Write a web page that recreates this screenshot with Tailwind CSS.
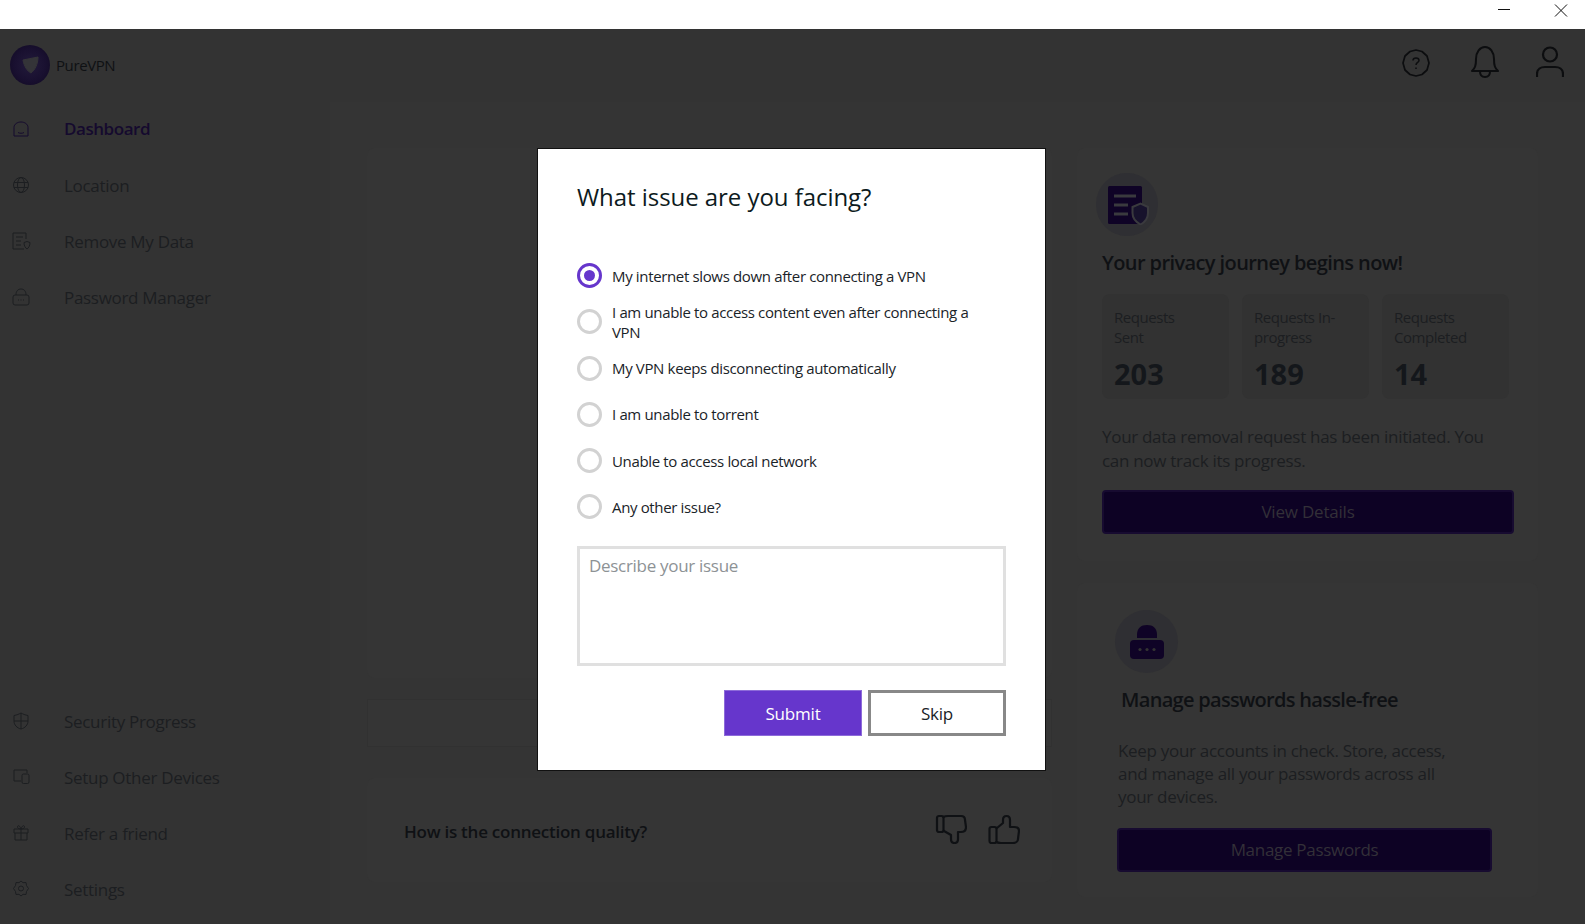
<!DOCTYPE html>
<html lang="en">
<head>
  <meta charset="UTF-8">
  <meta name="viewport" content="width=device-width, initial-scale=1.0">
  <title>PureVPN</title>
  <script src="https://cdn.jsdelivr.net/npm/@tailwindcss/browser@4"></script>
</head>
<body class="h-screen overflow-hidden bg-[#333333] font-['Open_Sans','Noto_Sans',sans-serif]">

  <!-- Title bar -->
  <div class="h-[29px] bg-white flex justify-end">
    <svg class="w-[87px] h-[29px]" viewBox="0 0 87 29" fill="none" stroke="#111" stroke-width="1">
      <path d="M0 9.5H12"/>
      <path d="M57 4.500L69 16.500M69 4.500L57 16.500"/>
    </svg>
  </div>

  <div class="flex h-[895px]">
    <!-- Sidebar -->
    <aside class="w-[330px] shrink-0 flex flex-col justify-between pb-[6px]">
      <div>
        <div class="h-[72px] pt-[16px] pl-[10px] flex items-start gap-[6px]">
          <div class="w-[40px] h-[40px] rounded-full bg-[radial-gradient(circle,#221a3a_0%,#191030_55%,#0f0820_100%)] flex items-center justify-center">
            <svg class="w-[17px] h-[18px]" viewBox="0 0 17 18"><path d="M1 4C6 3 11 2 16 1C16 8 13 14 9 17C5 15 2 10 1 4Z" fill="#343438" stroke="#343438" stroke-linejoin="round"/></svg>
          </div>
          <span class="text-[15px] leading-[40px] text-[#0f1114] tracking-[-0.4px]">PureVPN</span>
        </div>
        <nav class="mt-[1px] text-[17px] tracking-[-0.3px] text-[#1c1e21]">
          <a class="h-[56px] flex items-center pl-[13px] gap-[19px] pb-[2px] font-semibold tracking-[-0.45px] text-[#150a2e]">
            <svg class="w-[16px] h-[16px] mr-[16px]" viewBox="0 0 16 16" fill="none" stroke="#150a2e" stroke-width="1"><path d="M1 6.500C1 3 4.500 1 8 1S15 3 15 6.500V15H1Z"/><path d="M5 11.500C6.500 12.500 9.500 12.500 11 11.500"/></svg>
            Dashboard
          </a>
          <a class="h-[56px] flex items-center pl-[13px] gap-[19px]">
            <svg class="w-[16px] h-[16px] mr-[16px] mb-[2px]" viewBox="0 0 16 16" fill="none" stroke="#1c1e21" stroke-width="1"><circle cx="8" cy="8" r="7.500"/><ellipse cx="8" cy="8" rx="3.500" ry="7.500"/><path d="M1 5.500H15M1 10.500H15"/></svg>
            Location
          </a>
          <a class="h-[56px] flex items-center pl-[12px] gap-[19px]">
            <svg class="w-[19px] h-[18px] mr-[14px] mb-[2px]" viewBox="0 0 19 18" fill="none" stroke="#1c1e21" stroke-width="1"><path d="M14 7V1H1V17H12"/><path d="M4 5H11M4 9H9M4 13H9"/><path d="M12 10.500L15 9.500L18 10.500C18 14 16.500 16 15 17C13.500 16 12 14 12 10.500Z"/></svg>
            Remove My Data
          </a>
          <a class="h-[56px] flex items-center pl-[12px] gap-[19px]">
            <svg class="w-[18px] h-[18px] mr-[15px] mb-[2px]" viewBox="0 0 18 18" fill="none" stroke="#1c1e21" stroke-width="1"><path d="M4 7C4 3 6 1 9 1S14 3 14 7"/><rect x="1" y="7" width="16" height="10" rx="2"/><path d="M6 12H7M8.500 12H9.500M11 12H12"/></svg>
            Password Manager
          </a>
        </nav>
      </div>
      <nav class="text-[17px] tracking-[-0.3px] text-[#1c1e21]">
        <a class="h-[56px] flex items-center pl-[13px] gap-[19px]">
          <svg class="w-[16px] h-[18px] mr-[16px] mb-[3px]" viewBox="0 0 16 18" fill="none" stroke="#1c1e21" stroke-width="1"><path d="M1 3.500C4 3 6 2 8 1C10 2 12 3 15 3.500V9C15 13 12 16 8 17C4 16 1 13 1 9Z"/><path d="M8 1V17M1 9H15"/></svg>
          Security Progress
        </a>
        <a class="h-[56px] flex items-center pl-[13px] gap-[19px]">
          <svg class="w-[17px] h-[15px] mr-[15px] mb-[3px]" viewBox="0 0 17 15" fill="none" stroke="#1c1e21" stroke-width="1"><path d="M8 12H1V1H14V4"/><rect x="9" y="5" width="7" height="9.500" rx="1.500"/></svg>
          Setup Other Devices
        </a>
        <a class="h-[56px] flex items-center pl-[13px] gap-[19px]">
          <svg class="w-[16px] h-[17px] mr-[16px] mb-[3px]" viewBox="0 0 16 17" fill="none" stroke="#1c1e21" stroke-width="1"><path d="M1 5H15V9H1ZM2 9V16H14V9M8 5V16"/><path d="M8 5C6 5 4 4 4.500 2.500C5 1 7 1.500 8 5C9 1.500 11 1 11.500 2.500C12 4 10 5 8 5Z"/></svg>
          Refer a friend
        </a>
        <a class="h-[56px] flex items-center pl-[13px] gap-[19px]">
          <svg class="w-[16px] h-[17px] mr-[16px] mb-[3px]" viewBox="0 0 16 17" fill="none" stroke="#1c1e21" stroke-width="1"><path d="M8 1L10 2.700L13 2.500L13.500 5.500L15.500 8.500L13.500 11.500L13 14.500L10 14.300L8 16L6 14.300L3 14.500L2.500 11.500L0.500 8.500L2.500 5.500L3 2.500L6 2.700Z"/><circle cx="8" cy="8.500" r="2.500"/></svg>
          Settings
        </a>
      </nav>
    </aside>

    <div class="flex-1 min-w-0">
      <!-- Header icons -->
      <header class="h-[73px] pl-[1072px] pt-[17px] flex items-start">
        <svg class="w-[28px] h-[28px] mt-[3px]" viewBox="0 0 28 28" fill="none" stroke="#0c0d0f" stroke-width="1.700"><path d="M14 1L20 2.500L25 7L27 14L25 21L20 25.500L14 27L8 25.500L3 21L1 14L3 7L8 2.500Z" stroke-linejoin="round"/><path d="M11 11.500C11 9.500 12.500 9 14 9S17 10 17 11.500C17 13.500 14 13.500 14 16" stroke-width="1.500"/><path d="M14 18.500V20" stroke-width="1.500"/></svg>
        <svg class="w-[28px] h-[32px] ml-[41px]" viewBox="0 0 28 32" fill="none" stroke="#0c0d0f" stroke-width="2"><path d="M1 25C4 22 5 20 5 13C5 6 9 1 14 1S23 6 23 13C23 20 24 22 27 25Z" stroke-linejoin="round"/><path d="M9 25.500C9 29 11 31 14 31S19 29 19 25.500"/></svg>
        <svg class="w-[28px] h-[32px] ml-[37px]" viewBox="0 0 28 32" fill="none" stroke="#0c0d0f" stroke-width="2.200"><circle cx="14" cy="8.500" r="7"/><path d="M1 31V28C1 23 5 21 9 21H19C23 21 27 23 27 28V31"/></svg>
      </header>

      <!-- Content -->
      <main class="h-[822px] bg-[#343434] pl-[37px] pt-[46px] flex gap-[25px]">
        <div class="w-[685px] shrink-0">
          <section class="h-[530px] rounded-lg bg-[#353535]"></section>
          <div class="mt-[21px] h-[48px] border border-[#313131] bg-[#353535]"></div>
          <section class="mt-[31px] h-[104px] rounded-lg bg-[#353535] pl-[37px] pr-[33px] flex items-center justify-between">
            <p class="pt-[4px] text-[17px] font-semibold tracking-[-0.25px] text-[#0f1114]">How is the connection quality?</p>
            <div class="flex gap-[21px] pb-[3px] mr-[-1px]">
              <svg class="w-[32px] h-[30px]" viewBox="0 0 32 30" fill="none" stroke="#0f1114" stroke-width="2.200" stroke-linejoin="round" stroke-linecap="round"><rect x="2" y="2" width="6.500" height="16" rx="2"/><path d="M8.500 3C10 2 11 2 13 2H26C29 2 30 4 30 6L31 13C31 16 29 18 26 18H23V25C23 27 22 29 19.500 29C17 29 16 27 16 25V21L9 17"/></svg>
              <svg class="w-[32px] h-[30px]" viewBox="0 0 32 30" fill="none" stroke="#0f1114" stroke-width="2.200" stroke-linejoin="round" stroke-linecap="round"><rect x="1.500" y="13" width="7" height="16" rx="2"/><path d="M8.500 28C10 29 11 29 13 29H25C28 29 30 27 30 25L31 17C31 14 29 13 26 13H22V6C22 3 21 2 18.500 2C16 2 15 4 15 6V9L9 14"/></svg>
            </div>
          </section>
        </div>

        <div class="w-[461px] shrink-0">
          <section class="h-[413px] rounded-lg bg-[#353535] pt-[25px] pl-[25px] pr-[24px]">
            <div class="ml-[-6px] w-[62px] h-[63px] rounded-full bg-[#2f2f33] relative">
              <svg class="absolute left-[12px] top-[13px] w-[41px] h-[39px]" viewBox="0 0 41 39"><rect x="0" y="0" width="34" height="38" rx="1.500" fill="#0f0326"/><path d="M6 10H28M6 19H20M6 28H20" stroke="#3a3a3e" stroke-width="3"/><path d="M24.500 21L32.500 17.500L40 21V27C40 32 37 36 32.500 38.500C28 36 24.500 32 24.500 27Z" fill="#17122c" stroke="#3a3a3e" stroke-width="2"/></svg>
            </div>
            <h2 class="mt-[12px] text-[20px] leading-[30px] font-semibold tracking-[-0.6px] text-[#0f1114]">Your privacy journey begins now!</h2>
            <div class="mt-[16px] w-[407px] grid grid-cols-3 gap-[13px] text-[#1c1e21]">
              <div class="h-[105px] rounded-lg bg-[#323232] pl-[12px] pt-[13px]">
                <p class="text-[15px] leading-[20px] tracking-[-0.45px]">Requests<br>Sent</p>
                <p class="mt-[7px] text-[29px] leading-[40px] font-bold text-[#14171b]">203</p>
              </div>
              <div class="h-[105px] rounded-lg bg-[#323232] pl-[12px] pt-[13px]">
                <p class="text-[15px] leading-[20px] tracking-[-0.45px]">Requests In-<br>progress</p>
                <p class="mt-[7px] text-[29px] leading-[40px] font-bold text-[#14171b]">189</p>
              </div>
              <div class="h-[105px] rounded-lg bg-[#323232] pl-[12px] pt-[13px]">
                <p class="text-[15px] leading-[20px] tracking-[-0.45px]">Requests<br>Completed</p>
                <p class="mt-[7px] text-[29px] leading-[40px] font-bold text-[#14171b]">14</p>
              </div>
            </div>
            <p class="mt-[26px] text-[17px] leading-[24px] tracking-[-0.3px] text-[#1c1e21]">Your data removal request has been initiated. You<br>can now track its progress.</p>
            <button class="mt-[17px] w-[412px] h-[44px] rounded bg-[#0d0224] border-2 border-[#170b30] text-[17px] tracking-[-0.2px] text-[#333038]">View Details</button>
          </section>

          <section class="mt-[22px] h-[314px] rounded-lg bg-[#353535] pt-[27px] pl-[40px]">
            <div class="ml-[-2px] w-[63px] h-[63px] rounded-full bg-[#2f2f33] flex items-center justify-center">
              <svg class="w-[34px] h-[35px]" viewBox="0 0 34 35"><path d="M7 14V11C7 4 11 1 17 1S27 4 27 11V14Z" fill="#0f0326"/><rect x="0" y="16" width="34" height="19" rx="4" fill="#0f0326"/><circle cx="10" cy="25.500" r="1.600" fill="#333"/><circle cx="17" cy="25.500" r="1.600" fill="#333"/><circle cx="24" cy="25.500" r="1.600" fill="#333"/></svg>
            </div>
            <h2 class="mt-[12px] ml-[4px] text-[20px] leading-[30px] font-semibold tracking-[-0.7px] text-[#0f1114]">Manage passwords hassle-free</h2>
            <p class="mt-[24px] ml-[1px] text-[17px] leading-[23px] tracking-[-0.3px] text-[#1c1e21]">Keep your accounts in check. Store, access,<br>and manage all your passwords across all<br>your devices.</p>
            <button class="mt-[20px] w-[375px] h-[44px] rounded bg-[#0d0224] border-2 border-[#170b30] text-[17px] tracking-[-0.3px] text-[#333038]">Manage Passwords</button>
          </section>
        </div>
      </main>
    </div>
  </div>

  <!-- Feedback dialog -->
  <div class="absolute left-[537px] top-[148px] w-[509px] h-[623px] bg-white border border-[#111] pl-[39px] pr-[39px] pt-[28px] text-[#1a2328]">
    <h1 class="text-[24px] leading-[40px] tracking-[-0.05px] text-[#0d1a20]">What issue are you facing?</h1>
    <ul class="mt-[35px] text-[15px] tracking-[-0.35px]">
      <li class="h-[46px] flex items-center gap-[10px]">
        <span class="w-[25px] h-[25px] shrink-0 rounded-full border-[3px] border-[#6636cc] flex items-center justify-center"><span class="w-[11px] h-[11px] rounded-full bg-[#6636cc]"></span></span>
        <span class="pt-[2px]">My internet slows down after connecting a VPN</span>
      </li>
      <li class="h-[47px] flex items-center gap-[10px] leading-[20px]">
        <span class="w-[25px] h-[25px] shrink-0 rounded-full border-[3px] border-[#d2d2d2]"></span>
        <span>I am unable to access content even after connecting a<br>VPN</span>
      </li>
      <li class="h-[46px] flex items-center gap-[10px]">
        <span class="w-[25px] h-[25px] shrink-0 rounded-full border-[3px] border-[#d2d2d2]"></span>
        My VPN keeps disconnecting automatically
      </li>
      <li class="h-[46px] flex items-center gap-[10px]">
        <span class="w-[25px] h-[25px] shrink-0 rounded-full border-[3px] border-[#d2d2d2]"></span>
        I am unable to torrent
      </li>
      <li class="h-[46px] flex items-center gap-[10px]">
        <span class="w-[25px] h-[25px] shrink-0 rounded-full border-[3px] border-[#d2d2d2]"></span>
        <span class="pt-[2px]">Unable to access local network</span>
      </li>
      <li class="h-[46px] flex items-center gap-[10px]">
        <span class="w-[25px] h-[25px] shrink-0 rounded-full border-[3px] border-[#d2d2d2]"></span>
        <span class="pt-[2px]">Any other issue?</span>
      </li>
    </ul>
    <textarea placeholder="Describe your issue" class="mt-[17px] block w-[429px] h-[120px] border-[3px] border-[#e0e0e0] px-[9px] py-[4px] text-[17px] tracking-[-0.3px] placeholder:text-[#8d9295] resize-none"></textarea>
    <div class="mt-[24px] flex justify-end gap-[6px] text-[17px] tracking-[-0.2px]">
      <button class="w-[138px] h-[46px] pt-[2px] bg-[#6636cc] border border-[#8d6bd9] text-white">Submit</button>
      <button class="w-[138px] h-[46px] pt-[1px] bg-white border-[3px] border-[#888888] text-[#1a2328]">Skip</button>
    </div>
  </div>
</body>
</html>
